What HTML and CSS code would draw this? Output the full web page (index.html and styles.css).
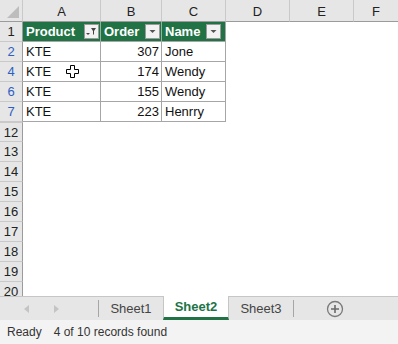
FILE: index.html
```html
<!DOCTYPE html>
<html>
<head>
<meta charset="utf-8">
<link rel="stylesheet" href="styles.css">
</head>
<body>
<div class="app">
  <div class="sheet">
    <div class="grid">
      <div class="ch corner"><svg width="12" height="12" viewBox="0 0 12 12"><polygon points="12,0 12,12 0,12" fill="#bdbdbd"/></svg></div>
      <div class="ch">A</div>
      <div class="ch">B</div>
      <div class="ch">C</div>
      <div class="ch">D</div>
      <div class="ch">E</div>
      <div class="ch last">F</div>

      <div class="rh">1</div>
      <div class="th"><span>Product</span><span class="fbtn"><svg width="13" height="13" viewBox="0 0 13 13"><path d="M6 3h5l-2 3v4l-1 -1v-3z" fill="#444"/><path d="M1 8h4l-2 2z" fill="#444"/></svg></span></div>
      <div class="th"><span>Order</span><span class="fbtn"><svg width="13" height="13" viewBox="0 0 13 13"><path d="M3.5 5h6l-3 3z" fill="#555"/></svg></span></div>
      <div class="th thc"><span>Name</span><span class="fbtn"><svg width="13" height="13" viewBox="0 0 13 13"><path d="M3.5 5h6l-3 3z" fill="#555"/></svg></span></div>
      <div class="c"></div><div class="c"></div><div class="c"></div>

      <div class="rh blue">2</div>
      <div class="td">KTE</div><div class="td num">307</div><div class="td tdc">Jone</div>
      <div class="c"></div><div class="c"></div><div class="c"></div>

      <div class="rh blue">4</div>
      <div class="td cur">KTE<svg class="cursor" width="13" height="13" viewBox="0 0 13 13"><path d="M4.5 0.5h4v4h4v4h-4v4h-4v-4h-4v-4h4z" fill="#fff" stroke="#000"/></svg></div><div class="td num">174</div><div class="td tdc">Wendy</div>
      <div class="c"></div><div class="c"></div><div class="c"></div>

      <div class="rh blue">6</div>
      <div class="td">KTE</div><div class="td num">155</div><div class="td tdc">Wendy</div>
      <div class="c"></div><div class="c"></div><div class="c"></div>

      <div class="rh blue">7</div>
      <div class="td">KTE</div><div class="td num">223</div><div class="td tdc">Henrry</div>
      <div class="c"></div><div class="c"></div><div class="c"></div>

      <div class="rh hid">12</div><div class="c span6"></div>
      <div class="rh">13</div><div class="c span6"></div>
      <div class="rh">14</div><div class="c span6"></div>
      <div class="rh">15</div><div class="c span6"></div>
      <div class="rh">16</div><div class="c span6"></div>
      <div class="rh">17</div><div class="c span6"></div>
      <div class="rh">18</div><div class="c span6"></div>
      <div class="rh">19</div><div class="c span6"></div>
      <div class="rh">20</div><div class="c span6"></div>
    </div>
  </div>
  <div class="tabbar">
    <div class="nav">
      <svg width="8" height="10" viewBox="0 0 8 10"><path d="M6 1v8l-5-4z" fill="#c4c4c4"/></svg>
      <svg width="8" height="10" viewBox="0 0 8 10"><path d="M2 1v8l5-4z" fill="#c4c4c4"/></svg>
    </div>
    <div class="sep"></div>
    <div class="tab">Sheet1</div>
    <div class="tab active">Sheet2</div>
    <div class="tab">Sheet3</div>
    <div class="sep"></div>
    <div class="add"><svg width="18" height="18" viewBox="0 0 18 18"><circle cx="9" cy="9" r="7.5" fill="none" stroke="#7a7a7a" stroke-width="1.3"/><path d="M9 5v8M5 9h8" stroke="#6a6a6a" stroke-width="1.6"/></svg></div>
  </div>
  <div class="status">
    <span>Ready</span>
    <span>4 of 10 records found</span>
  </div>
</div>
</body>
</html>
```
FILE: styles.css
```css
html, body {
  margin: 0;
  padding: 0;
  background: #fff;
}
.app {
  width: 398px;
  height: 344px;
  display: flex;
  flex-direction: column;
  font-family: "Liberation Sans", Arial, sans-serif;
  overflow: hidden;
}
.sheet {
  height: 296px;
  overflow: hidden;
  flex: none;
}
.grid {
  display: grid;
  grid-template-columns: 23px 78px 61px 64px 64px 64px 44px;
  grid-auto-rows: 20px;
  grid-template-rows: 22px;
}
.ch {
  background: #e6e6e6;
  border-bottom: 1px solid #9b9b9b;
  border-right: 1px solid #c9c9c9;
  box-sizing: border-box;
  display: flex;
  align-items: center;
  justify-content: center;
  font-size: 13px;
  color: #222;
  padding-top: 1px;
}
.ch.last { border-right: none; }
.corner {
  justify-content: flex-end;
  align-items: flex-end;
  padding: 0 3px 3px 0;
}
.rh {
  background: #e6e6e6;
  border-right: 1px solid #9b9b9b;
  border-bottom: 1px solid #c9c9c9;
  box-sizing: border-box;
  display: flex;
  align-items: center;
  justify-content: center;
  font-size: 13px;
  color: #222;
}
.rh.blue { color: #2b5fc4; }
.rh.hid { border-top: 1px solid #c9c9c9; }
.th {
  background: #217346;
  color: #fff;
  font-weight: bold;
  font-size: 13px;
  display: flex;
  align-items: center;
  justify-content: space-between;
  padding: 0 1px 0 3px;
  box-sizing: border-box;
  border-right: 1px solid #8fb39f;
  border-bottom: 1px solid #a6a6a6;
}
.th.thc { border-right: 1px solid #a6a6a6; padding-right: 4px; }
.fbtn {
  width: 15px;
  height: 15px;
  background: #f2f2f2;
  border: 1px solid #9a9a9a;
  box-sizing: border-box;
  display: flex;
  align-items: center;
  justify-content: center;
}
.td {
  font-size: 13px;
  color: #111;
  display: flex;
  align-items: center;
  padding: 0 2px 0 3px;
  border-right: 1px solid #a6a6a6;
  border-bottom: 1px solid #a6a6a6;
  box-sizing: border-box;
}
.td.num { justify-content: flex-end; }
.cur { position: relative; }
.cursor {
  position: absolute;
  left: 43px;
  top: 3px;
}
.c { background: #fff; }
.span6 { grid-column: span 6; }
.tabbar {
  height: 24px;
  flex: none;
  background: #e6e6e6;
  border-top: 1px solid #c6c6c6;
  box-sizing: border-box;
  display: flex;
  align-items: stretch;
  font-size: 13px;
  color: #444;
}
.nav {
  width: 98px;
  display: flex;
  align-items: center;
  gap: 21px;
  padding-left: 23px;
  box-sizing: border-box;
}
.sep {
  width: 1px;
  background: #a6a6a6;
  margin: 3px 0 3px;
}
.tab {
  width: 64px;
  display: flex;
  align-items: center;
  justify-content: center;
  padding-bottom: 1px;
}
.tab.active {
  background: #fff;
  color: #217346;
  font-weight: bold;
  margin-top: -1px;
  border-left: 1px solid #c6c6c6;
  border-right: 1px solid #c6c6c6;
  border-bottom: 3px solid #217346;
  box-sizing: border-box;
  width: 66px;
  padding-bottom: 0;
}
.add {
  width: 82px;
  display: flex;
  align-items: center;
  justify-content: center;
}
.status {
  flex: 1;
  background: #f3f3f3;
  display: flex;
  align-items: center;
  gap: 12px;
  padding-left: 7px;
  font-size: 12px;
  color: #333;
}
```
